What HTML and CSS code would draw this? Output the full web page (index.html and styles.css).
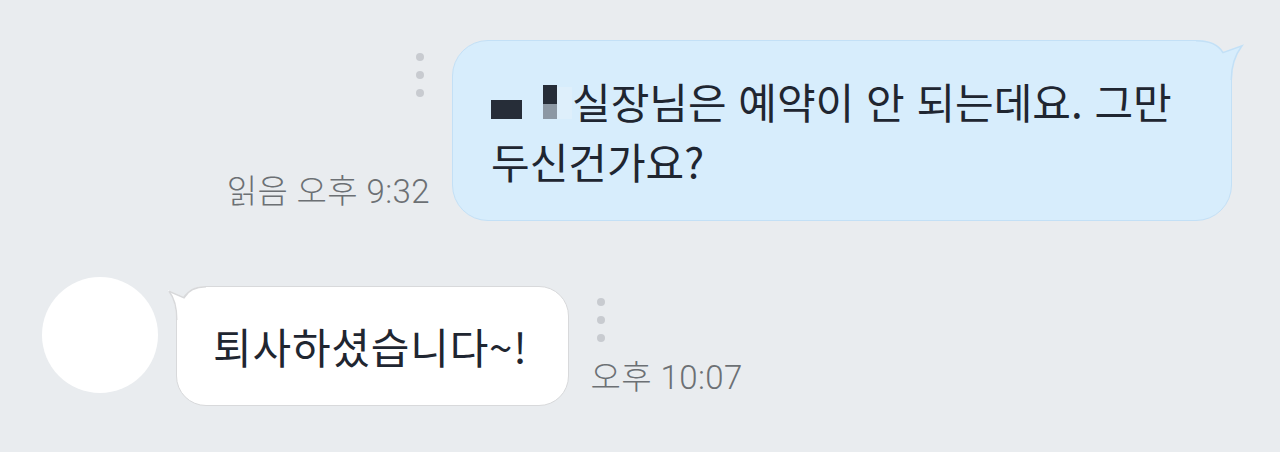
FILE: index.html
```html
<!DOCTYPE html>
<html lang="ko">
<head>
<meta charset="utf-8">
<title>Chat</title>
<link rel="stylesheet" href="styles.css">
</head>
<body>
<div class="chat">
  <div class="row sent">
    <div class="meta meta-sent">
      <div class="dots"><span></span><span></span><span></span></div>
      <div class="time">읽음 오후 9:32</div>
    </div>
    <div class="bubble bubble-sent">
      <svg class="tail tail-sent" width="56" height="50" viewBox="0 0 56 50">
        <path class="tail-fill" d="M6,4 Q26,4 33,16 L53,9 Q42,24 42,44 L6,44 Z"/>
        <path class="tail-line" d="M6,4.75 Q26,4.75 33,16.6 L52,9.8 Q41.25,24 41.25,44"/>
      </svg>
      <span class="mask"><span class="m1"></span><span class="m2"><i class="m2a"></i><i class="m2b"></i></span><span class="m3"></span></span>실장님은 예약이 안 되는데요. 그만 두신건가요?
    </div>
  </div>

  <div class="row received">
    <div class="avatar"></div>
    <div class="group">
      <div class="bubble bubble-recv">
        <svg class="tail tail-recv" width="50" height="50" viewBox="0 0 50 50">
          <path class="tail-fill" d="M42,4 Q26,4 20,15 L4,8 Q12,18 12,38 L42,38 Z"/>
          <path class="tail-line" d="M42,4.75 Q26,4.75 20,15.8 L5,9.3 Q12.75,19 12.75,38"/>
        </svg>
        퇴사하셨습니다~!
      </div>
      <div class="meta meta-recv">
        <div class="dots"><span></span><span></span><span></span></div>
        <div class="time">오후 10:07</div>
      </div>
    </div>
  </div>
</div>
</body>
</html>
```

FILE: styles.css
```css
html, body {
  margin: 0;
  padding: 0;
  background: #e9ecef;
}

body {
  width: 1280px;
  height: 452px;
  overflow: hidden;
  font-family: "Noto Sans CJK KR", "Noto Sans", sans-serif;
}

.chat {
  padding: 40px 48px 0 42px;
  display: flex;
  flex-direction: column;
}

.row {
  display: flex;
}

.sent {
  justify-content: flex-end;
  gap: 22px;
}

.received {
  margin-top: 56px;
  align-items: flex-start;
}

.bubble {
  position: relative;
  box-sizing: border-box;
  font-size: 42px;
  line-height: 60px;
  color: #1f2631;
  word-break: keep-all;
}

.bubble-sent {
  width: 780px;
  padding: 30px 20px 29px 38px;
  background: #d7edfc;
  border: 1.5px solid #c3e0f6;
  border-radius: 36px;
}

.bubble-recv {
  padding: 29px 40px 29px 36px;
  background: #ffffff;
  border: 1.5px solid #d8d9db;
  border-radius: 30px;
  letter-spacing: 0.8px;
}

.tail {
  position: absolute;
  overflow: visible;
}

.tail-sent {
  left: 736.5px;
  top: -5.5px;
}

.tail-sent .tail-fill { fill: #d7edfc; }
.tail-sent .tail-line { fill: none; stroke: #c3e0f6; stroke-width: 1.5; }

.tail-recv {
  left: -13.5px;
  top: -5.5px;
}

.tail-recv .tail-fill { fill: #ffffff; }
.tail-recv .tail-line { fill: none; stroke: #d8d9db; stroke-width: 1.5; }

.mask {
  display: inline-flex;
  align-items: flex-end;
  vertical-align: baseline;
  margin-right: 0;
}

.m1 {
  width: 31px;
  height: 19px;
  background: #262d38;
  margin-right: 21px;
}

.m2 {
  display: flex;
  flex-direction: column;
  width: 14px;
}

.m2 i {
  display: block;
}

.m2a {
  height: 19px;
  background: #262d38;
}

.m2b {
  height: 15px;
  background: #8c98a4;
}

.m3 {
  width: 15px;
  height: 32px;
  background: #deeffb;
}

.meta {
  display: flex;
  flex-direction: column;
  justify-content: space-between;
}

.meta-sent {
  align-items: flex-end;
  padding: 13px 0 11px;
}

.meta-sent .dots {
  margin-right: 6px;
}

.meta-recv {
  align-items: flex-start;
  padding: 12px 0 10px;
}

.meta-recv .dots {
  margin-left: 6px;
}

.dots {
  display: flex;
  flex-direction: column;
  gap: 10px;
}

.dots span {
  display: block;
  width: 8px;
  height: 8px;
  border-radius: 50%;
  background: #c8cbd0;
}

.time {
  font-family: Roboto, "Noto Sans CJK KR", sans-serif;
  font-size: 33px;
  font-weight: 300;
  letter-spacing: 0.4px;
  line-height: 36px;
  color: #6c7074;
  white-space: nowrap;
}

.avatar {
  width: 116px;
  height: 116px;
  border-radius: 50%;
  background: #ffffff;
  flex: none;
  margin-right: 18px;
}

.group {
  display: flex;
  gap: 22px;
  margin-top: 9px;
}
```
